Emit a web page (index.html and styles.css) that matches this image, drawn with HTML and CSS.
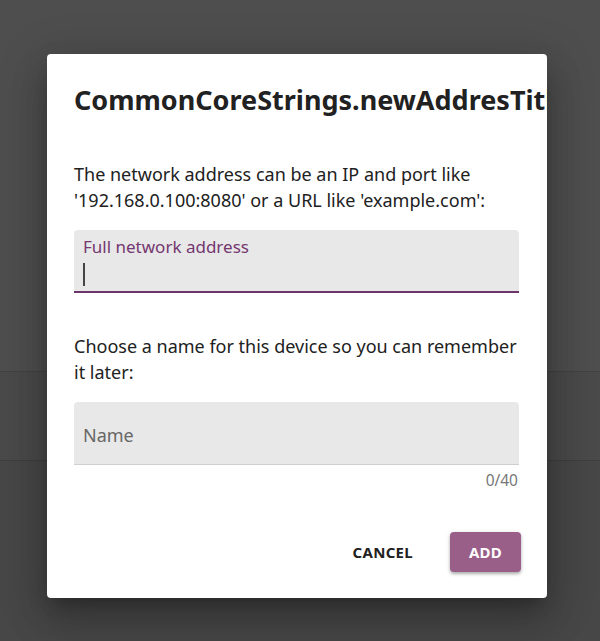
FILE: index.html
```html
<!DOCTYPE html>
<html lang="en">
<head>
<meta charset="utf-8">
<title>New address</title>
<link rel="stylesheet" href="styles.css">
</head>
<body>
<div class="backdrop">
  <div class="bg-top"></div>
  <div class="bg-row"></div>
  <div class="bg-rest"></div>
</div>
<div class="dialog" role="dialog">
  <h1 class="title">CommonCoreStrings.newAddresTitle</h1>
  <p class="text text-first">The network address can be an IP and port like '192.168.0.100:8080' or a URL like 'example.com':</p>
  <div class="field field-active">
    <span class="label">Full network address</span>
    <span class="cursor"></span>
  </div>
  <p class="text text-second">Choose a name for this device so you can remember it later:</p>
  <div class="field field-idle">
    <span class="placeholder">Name</span>
  </div>
  <div class="counter">0/40</div>
  <div class="actions">
    <button class="btn btn-text">CANCEL</button>
    <button class="btn btn-primary">ADD</button>
  </div>
</div>
</body>
</html>
```
FILE: styles.css
```css
html, body {
  margin: 0;
  padding: 0;
  height: 100%;
}
body {
  font-family: "Noto Sans", "Open Sans", sans-serif;
  background: #4e4e4e;
  overflow: hidden;
}
.backdrop {
  display: flex;
  flex-direction: column;
  height: 100%;
}
.bg-top {
  height: 371px;
  background: #4e4e4e;
  border-bottom: 1px solid #424242;
}
.bg-row {
  height: 88px;
  background: #4a4a4a;
  border-bottom: 1px solid #3e3e3e;
}
.bg-rest {
  flex: 1;
  background: #474747;
}
.dialog {
  position: absolute;
  left: 47px;
  top: 54px;
  width: 500px;
  height: 544px;
  box-sizing: border-box;
  padding: 30px 28px 26px 27px;
  background: #fff;
  border-radius: 4px;
  overflow: hidden;
  display: flex;
  flex-direction: column;
  box-shadow: 0 11px 15px -7px rgba(0,0,0,.25), 0 24px 38px 3px rgba(0,0,0,.16), 0 9px 46px 8px rgba(0,0,0,.14);
}
.title {
  margin: 0;
  font-size: 27px;
  line-height: 32px;
  font-weight: 700;
  color: #212121;
  white-space: nowrap;
}
.text {
  margin: 0;
  font-size: 18px;
  line-height: 26px;
  color: #212121;
}
.text-first {
  margin-top: 45px;
}
.text-second {
  margin-top: 40px;
}
.field {
  margin-top: 17px;
  height: 63px;
  box-sizing: border-box;
  background: #e8e8e8;
  border-radius: 4px 4px 0 0;
  padding: 0 9px;
  display: flex;
  flex-direction: column;
}
.field-active {
  border-bottom: 2px solid #6e3368;
  padding-top: 5px;
}
.field-idle {
  border-bottom: 1px solid #cfcfcf;
  justify-content: center;
}
.label {
  font-size: 17px;
  line-height: 23px;
  color: #74376f;
}
.cursor {
  margin-top: 5px;
  width: 2px;
  height: 23px;
  background: #444;
}
.placeholder {
  font-size: 18px;
  line-height: 24px;
  color: #666;
  margin-top: 3px;
}
.counter {
  align-self: flex-end;
  margin-top: 5px;
  margin-right: 1px;
  font-size: 15.5px;
  line-height: 20px;
  color: #777;
}
.actions {
  margin-top: auto;
  display: flex;
  justify-content: flex-end;
  gap: 21px;
  margin-right: -2px;
}
.btn {
  font-family: "Noto Sans", "Open Sans", sans-serif;
  height: 40px;
  border: none;
  border-radius: 4px;
  font-size: 15px;
  font-weight: 700;
  letter-spacing: 0.3px;
  cursor: pointer;
}
.btn-text {
  background: transparent;
  color: #212121;
  padding: 0 16px;
}
.btn-primary {
  width: 71px;
  background: #9a5f89;
  color: #fff;
  padding: 0;
  box-shadow: 0 2px 3px rgba(0,0,0,.25), 0 1px 5px rgba(0,0,0,.12);
}
```
